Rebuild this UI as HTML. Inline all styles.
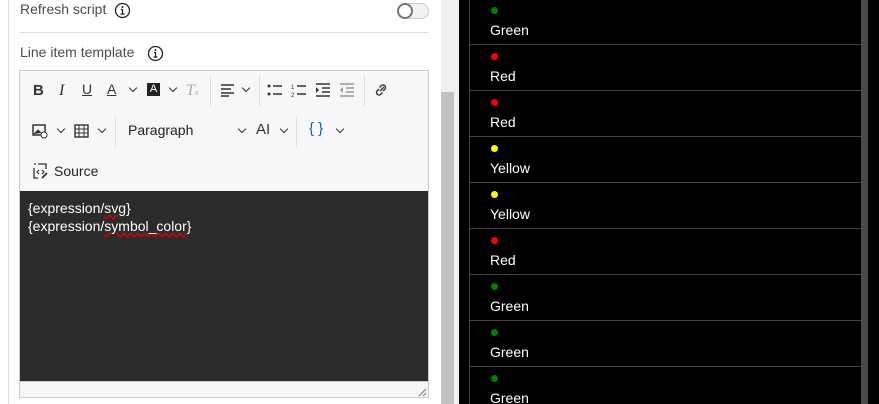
<!DOCTYPE html>
<html><head><meta charset="utf-8"><style>
*{margin:0;padding:0;box-sizing:border-box}
html,body{width:879px;height:404px;overflow:hidden}
body{background:#000;font-family:"Liberation Sans",Arial,sans-serif;position:relative}
.a{position:absolute}
.lbl{font-size:14px;color:#4a4a4a}
.ic{position:absolute;font-size:14px;color:#333;line-height:1}
.row{position:absolute;left:469px;width:392px;height:46px;border-bottom:1px solid #444}
.dot{position:absolute;left:22px;width:7px;height:7px;border-radius:50%}
.rt{position:absolute;left:21px;top:23px;color:#fff;font-size:14px}
.sep{position:absolute;width:1px;background:#ddd}
.chev{position:absolute;width:6px;height:6px;border-right:1.5px solid #333;border-bottom:1.5px solid #333;transform:rotate(45deg)}
</style></head><body>
<div class="a" style="left:0;top:0;width:441px;height:404px;background:#fff"></div>
<div class="a" style="left:8px;top:0;width:1px;height:404px;background:#ddd"></div>
<div class="a" style="left:441px;top:0;width:18px;height:404px;background:#f0f0f0"></div>
<div class="a" style="left:441px;top:92px;width:13px;height:312px;background:#c1c1c1"></div>

<div class="a lbl" style="left:20px;top:1px">Refresh script</div>
<svg class="a" style="left:114px;top:2px" width="17" height="17" viewBox="0 0 17 17"><circle cx="8.5" cy="8.5" r="7" fill="none" stroke="#222" stroke-width="1.3"/><circle cx="8.5" cy="5" r="1" fill="#222"/><path d="M7 7.5h1.5v4.5M6.5 12h4" stroke="#222" stroke-width="1.2" fill="none"/></svg>
<div class="a" style="left:397px;top:3px;width:32px;height:16px;border:1px solid #ccc;border-radius:8px;background:#f3f3f3"></div>
<div class="a" style="left:397px;top:3px;width:16px;height:16px;border:2px solid #777;border-radius:50%;background:#fff"></div>
<div class="a" style="left:19px;top:32px;width:410px;height:1px;background:#ddd"></div>
<div class="a lbl" style="left:20px;top:44px">Line item template</div>
<svg class="a" style="left:147px;top:45px" width="17" height="17" viewBox="0 0 17 17"><circle cx="8.5" cy="8.5" r="7" fill="none" stroke="#222" stroke-width="1.3"/><circle cx="8.5" cy="5" r="1" fill="#222"/><path d="M7 7.5h1.5v4.5M6.5 12h4" stroke="#222" stroke-width="1.2" fill="none"/></svg>

<div class="a" style="left:19px;top:70px;width:410px;height:328px;border:1px solid #ccc;background:#f7f7f7"></div>
<div class="ic" style="left:33px;top:83px;font-weight:bold;font-size:15px">B</div>
<div class="ic" style="left:59px;top:83px;font-style:italic;font-family:'Liberation Serif';font-size:16px">I</div>
<div class="ic" style="left:82px;top:82px;text-decoration:underline;font-size:14px">U</div>
<div class="ic" style="left:107px;top:82px;text-decoration:underline">A</div>
<div class="chev" style="left:130px;top:85px"></div>
<div class="a" style="left:147px;top:83px;width:13px;height:13px;background:#222;color:#fff;font-size:11px;text-align:center;line-height:13px">A</div>
<div class="chev" style="left:170px;top:85px"></div>
<div class="ic" style="left:186px;top:83px;color:#aaa;font-family:'Liberation Serif';font-style:italic;font-size:16px">T<span style="font-size:8px">x</span></div>
<div class="sep" style="left:210px;top:76px;height:30px"></div>
<svg class="a" style="left:220px;top:83px" width="16" height="14"><path d="M1 2h13M1 6h10M1 10h13M1 13h8" stroke="#333" stroke-width="1.4"/></svg>
<div class="chev" style="left:243px;top:85px"></div>
<div class="sep" style="left:259px;top:76px;height:30px"></div>
<svg class="a" style="left:267px;top:83px" width="16" height="14"><circle cx="2" cy="3" r="1.5" fill="#333"/><circle cx="2" cy="11" r="1.5" fill="#333"/><path d="M6 3h9M6 11h9" stroke="#333" stroke-width="1.4"/></svg>
<svg class="a" style="left:291px;top:83px" width="16" height="14"><text x="0" y="6" font-size="6" fill="#333">1</text><text x="0" y="14" font-size="6" fill="#333">2</text><path d="M6 3h9M6 11h9" stroke="#333" stroke-width="1.4"/></svg>
<svg class="a" style="left:315px;top:83px" width="16" height="14"><path d="M1 1h14M7 5h8M7 9h8M1 13h14" stroke="#333" stroke-width="1.4"/><path d="M1 4l3 3-3 3z" fill="#333"/></svg>
<svg class="a" style="left:339px;top:83px" width="16" height="14"><path d="M1 1h14M7 5h8M7 9h8M1 13h14" stroke="#999" stroke-width="1.4"/><path d="M4 4l-3 3 3 3z" fill="#999"/></svg>
<div class="sep" style="left:364px;top:76px;height:30px"></div>
<svg class="a" style="left:374px;top:83px" width="14" height="14"><path d="M6 8l4-4M5 6l-2 2a2.5 2.5 0 0 0 3.5 3.5l2-2M9 8l2-2a2.5 2.5 0 0 0-3.5-3.5l-2 2" stroke="#333" stroke-width="1.4" fill="none"/></svg>
<svg class="a" style="left:32px;top:123px" width="16" height="16"><rect x="1" y="2" width="12" height="10" fill="none" stroke="#333" stroke-width="1.5"/><path d="M2 11l4-4 3 3" fill="#333" stroke="#333"/><circle cx="12" cy="12" r="3" fill="#fff" stroke="#333"/></svg>
<div class="chev" style="left:58px;top:126px"></div>
<svg class="a" style="left:74px;top:124px" width="15" height="14"><rect x="1" y="1" width="13" height="12" fill="none" stroke="#333" stroke-width="1.4"/><path d="M1 5h13M1 9h13M5 1v12M10 1v12" stroke="#333"/></svg>
<div class="chev" style="left:99px;top:126px"></div>
<div class="sep" style="left:115px;top:117px;height:30px"></div>
<div class="ic" style="left:128px;top:123px;font-size:14px;color:#222">Paragraph</div>
<div class="chev" style="left:239px;top:126px"></div>
<div class="ic" style="left:256px;top:122px;font-size:15px">AI</div>
<div class="chev" style="left:281px;top:126px"></div>
<div class="sep" style="left:296px;top:117px;height:30px"></div>
<div class="ic" style="left:309px;top:121px;font-size:15px;color:#1a5fb4">{ }</div>
<div class="chev" style="left:337px;top:126px"></div>
<svg class="a" style="left:33px;top:163px" width="16" height="16"><path d="M5 1h8v5M1 5v10h4M1 1h2" stroke="#333" stroke-width="1.3" fill="none"/><path d="M6 7l-2 2 2 2M9 7l2 2-2 2" stroke="#333" stroke-width="1.2" fill="none"/><path d="M9 15l5-5" stroke="#333" stroke-width="1.8"/></svg>
<div class="ic" style="left:54px;top:164px;font-size:14px;color:#222">Source</div>
<div class="a" style="left:20px;top:191px;width:408px;height:190px;background:#2b2b2b"></div>
<div class="a" style="left:28px;top:199px;color:#fff;font-size:14px;line-height:18px">{expression/<span style="text-decoration:underline wavy #d00">svg</span>}<br>{expression/<span style="text-decoration:underline wavy #d00">symbol_color</span>}</div>
<div class="a" style="left:20px;top:381px;width:408px;height:1px;background:#ccc"></div>
<svg class="a" style="left:418px;top:388px" width="9" height="9"><path d="M1 8l7-7M5 8l3-3" stroke="#777"/></svg>

<div class="a" style="left:469px;top:0;width:1px;height:404px;background:#444"></div>
<div class="a" style="left:861px;top:0;width:7px;height:404px;background:#4a4a4a"></div>
<div class="row" style="top:-1px"><div class="dot" style="top:8px;background:#008000"></div><div class="rt">Green</div></div>
<div class="row" style="top:45px"><div class="dot" style="top:8px;background:#f00"></div><div class="rt">Red</div></div>
<div class="row" style="top:91px"><div class="dot" style="top:8px;background:#f00"></div><div class="rt">Red</div></div>
<div class="row" style="top:137px"><div class="dot" style="top:8px;background:#ff0"></div><div class="rt">Yellow</div></div>
<div class="row" style="top:183px"><div class="dot" style="top:8px;background:#ff0"></div><div class="rt">Yellow</div></div>
<div class="row" style="top:229px"><div class="dot" style="top:8px;background:#f00"></div><div class="rt">Red</div></div>
<div class="row" style="top:275px"><div class="dot" style="top:8px;background:#008000"></div><div class="rt">Green</div></div>
<div class="row" style="top:321px"><div class="dot" style="top:8px;background:#008000"></div><div class="rt">Green</div></div>
<div class="row" style="top:367px;border-bottom:none;height:37px"><div class="dot" style="top:8px;background:#008000"></div><div class="rt">Green</div></div>
</body></html>
